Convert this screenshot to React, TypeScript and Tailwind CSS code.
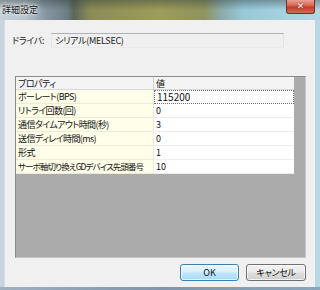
import React from 'react';

const rows = [
  { name: 'ボーレート(BPS)', value: '115200', focus: true },
  { name: 'リトライ回数(回)', value: '0' },
  { name: '通信タイムアウト時間(秒)', value: '3' },
  { name: '送信ディレイ時間(ms)', value: '0' },
  { name: '形式', value: '1' },
  { name: 'サーボ軸切り換えGDデバイス先頭番号', value: '10', tight: true },
];

const font = "font-['Noto_Sans_CJK_JP','Noto_Sans',sans-serif] [font-feature-settings:'palt']";

export default function App() {
  return (
    <div
      className={`w-[320px] h-[290px] flex flex-col overflow-hidden ${font} bg-[linear-gradient(90deg,#c9d4dc_0%,#b4c4d0_40%,#a9cddd_75%,#b9d8e6_100%)]`}
    >
      {/* title bar */}
      <div className="h-[20px] flex items-start relative bg-[linear-gradient(180deg,rgba(40,55,55,0.4),rgba(0,0,0,0)_50%),linear-gradient(90deg,#c6d0d8_0%,#b8c4cc_8%,#8797a3_14%,#6d7d82_21%,#5a665a_23%,#8a8c56_28%,#9c9c5a_50%,#8e935e_64%,#8aa9a8_69%,#98c8d8_76%,#a6d2e2_90%,#b4d6e4_100%)]">
        <span className="ml-[2px] mt-[4px] text-[9px] leading-[12px] text-[#111] [text-shadow:0_0_4px_#ffffff,0_0_2px_#ffffff]">
          詳細設定
        </span>
        <div className="ml-auto mr-[5px] w-[29px] h-[14px] rounded-b-[3px] border border-t-0 border-[#7c2a22] bg-[linear-gradient(180deg,#e8a394_0%,#d7604c_45%,#c03c28_55%,#d0705a_100%)] flex items-center justify-center">
          <span className="text-white text-[9px] font-bold leading-none font-['DejaVu_Sans',sans-serif] [text-shadow:0_0_2px_#5a1008]">
            ✕
          </span>
        </div>
      </div>

      {/* client area */}
      <div className="mx-[4px] mr-[5px] h-[267px] bg-[#f0f0f0] flex flex-col border-l border-[#d6dde3]">
        {/* driver row */}
        <div className="flex items-center mt-[13px] pl-[7px]">
          <span className="w-[39px] text-[9px] leading-[15px] text-[#222] tracking-[-0.3px]">ドライバ:</span>
          <div className="w-[233px] h-[15px] border-t border-[#aeb1b6] border-x border-b border-x-[#e2e4e8] border-b-[#e8eaed] flex items-center pl-[3px]">
            <span className="text-[9px] leading-[13px] text-[#222] tracking-[-0.3px]">シリアル(MELSEC)</span>
          </div>
        </div>

        {/* grid */}
        <div className="ml-[10px] mr-[9px] mt-[28px] h-[182px] border border-[#8a8a8a] border-r-[#c8c8c8] border-b-[#c8c8c8] bg-[#ababab]">
          <div className="w-[278px] bg-white">
            <div className="flex h-[13px] bg-[#f4f4f4] border-b border-[#d8d8d8]">
              <div className="w-[138px] pl-[2px] border-r border-[#d0d0d0] text-[9px] leading-[13px] text-[#111] tracking-[-0.5px]">
                プロパティ
              </div>
              <div className="flex-1 pl-[2px] text-[9px] leading-[13px] text-[#111]">値</div>
            </div>
            {rows.map((r, i) => (
              <div key={i} className="flex h-[14px]">
                <div
                  className={
                    r.tight
                      ? 'w-[138px] pl-[2px] bg-[#fffee8] border-b border-r border-[#ecebd6] text-[8.5px] leading-[13px] text-[#111] tracking-[-0.9px] whitespace-nowrap overflow-hidden'
                      : 'w-[138px] pl-[2px] bg-[#fffee8] border-b border-r border-[#ecebd6] text-[9px] leading-[13px] text-[#111] tracking-[-0.6px] whitespace-nowrap overflow-hidden'
                  }
                >
                  {r.name}
                </div>
                <div
                  className={
                    r.focus
                      ? 'flex-1 pl-[2px] bg-white border border-dotted border-[#707070] text-[10px] leading-[12px] text-[#111]'
                      : 'flex-1 pl-[2px] bg-white border-b border-[#eeeeee] text-[9px] leading-[13px] text-[#111]'
                  }
                >
                  {r.value}
                </div>
              </div>
            ))}
          </div>
        </div>

        {/* buttons */}
        <div className="flex justify-end gap-[7px] mt-[6px] mr-[9px]">
          <button className="w-[59px] h-[17px] rounded-[3px] border border-[#3c7fb1] bg-[linear-gradient(180deg,#eaf6fd_0%,#d9f0fc_45%,#bee6fd_55%,#a7d9f5_100%)] shadow-[inset_0_0_0_1px_rgba(255,255,255,0.7)] text-[9px] leading-none text-[#111]">
            OK
          </button>
          <button className="w-[60px] h-[17px] rounded-[3px] border border-[#707070] bg-[linear-gradient(180deg,#f2f2f2_0%,#ebebeb_45%,#dddddd_55%,#cfcfcf_100%)] shadow-[inset_0_0_0_1px_rgba(255,255,255,0.7)] text-[9px] leading-none text-[#111] tracking-[-0.3px]">
            キャンセル
          </button>
        </div>
      </div>
      <div className="flex-1 bg-[linear-gradient(90deg,#9fb0c0,#7f96ac_50%,#8aa6bc)]" />
    </div>
  );
}
